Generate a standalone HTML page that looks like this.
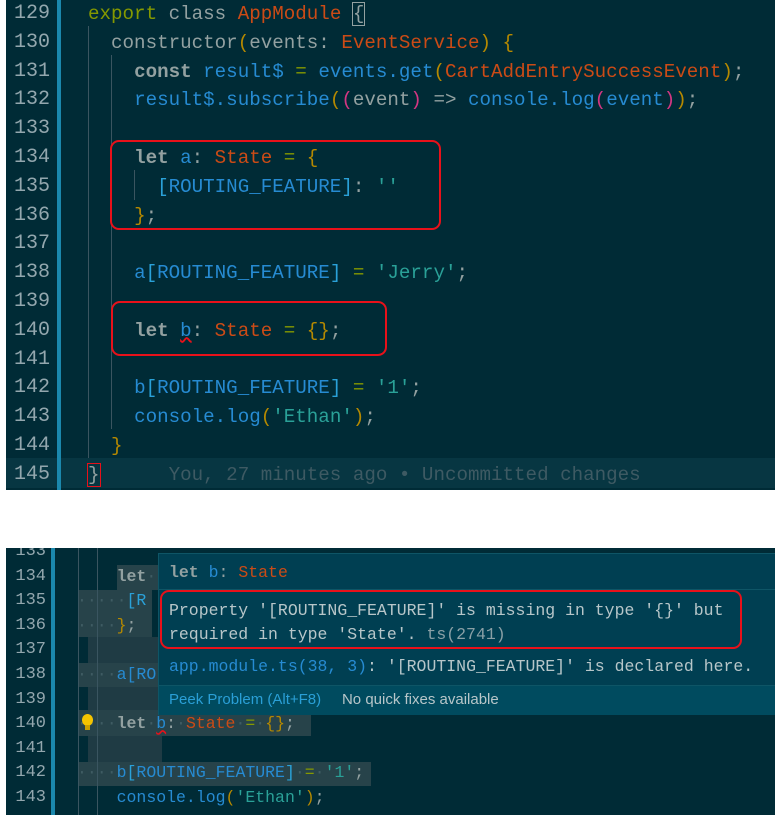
<!DOCTYPE html>
<html><head><style>
body{margin:0;width:775px;height:815px;background:#fff;position:relative;overflow:hidden;font-family:"Liberation Mono",monospace}
.p{position:absolute;background:#002b36;overflow:hidden}
.ln{position:absolute;color:#93a7ae;text-align:right;white-space:pre}
.c{position:absolute;white-space:pre;color:#93a1a1}
.k{color:#93a1a1;font-weight:bold}.ex{color:#859900}.o{color:#cb4b16}.b{color:#268bd2}.y{color:#b58900}.m{color:#d33682}.s{color:#2aa198}.g{color:#859900}.lb{color:#2aa1d8}
.guide{position:absolute;width:1px;background:#3a5560}
.red{position:absolute;border:2px solid #e8111a;border-radius:9px}
.d{color:#3f5c63}
.hl{position:absolute;background:#27434a}
</style></head><body>
<div class="p" style="left:6px;top:0;width:769px;height:490px;font-size:19.2px">
<div style="position:absolute;left:0;top:458px;width:769px;height:30px;background:#073642"></div>
<div style="position:absolute;left:51px;top:0;width:4px;height:490px;background:#1b88ad"></div>
<div class="guide" style="left:82px;top:26px;height:432px"></div>
<div class="guide" style="left:105px;top:55px;height:374px"></div>
<div class="guide" style="left:128px;top:170px;height:30px"></div>
<div class="ln" style="left:0;width:44px;top:0;line-height:28.8px;font-size:20px">129
130
131
132
133
134
135
136
137
138
139
140
141
142
143
144
145</div>
<div class="c" style="left:82px;top:0;line-height:28.8px"><span class="ex">export</span> class <span class="o">AppModule</span> <span style="outline:1px solid #93a1a1">{</span>
  constructor<span class="y">(</span>events: <span class="o">EventService</span><span class="y">)</span> <span class="y">{</span>
    <span class="k">const</span> <span class="b">result$</span> <span class="g">=</span> <span class="b">events.get</span><span class="y">(</span><span class="o">CartAddEntrySuccessEvent</span><span class="y">)</span>;
    <span class="b">result$.subscribe</span><span class="y">(</span><span class="m">(</span>event<span class="m">)</span> => <span class="b">console.log</span><span class="m">(</span><span class="b">event</span><span class="m">)</span><span class="y">)</span>;

    <span class="k">let</span> <span class="b">a</span>: <span class="o">State</span> <span class="g">=</span> <span class="y">{</span>
      <span class="lb">[</span><span class="b">ROUTING_FEATURE</span><span class="lb">]</span>: <span class="s">''</span>
    <span class="y">}</span>;

    <span class="b">a</span><span class="lb">[</span><span class="b">ROUTING_FEATURE</span><span class="lb">]</span> <span class="g">=</span> <span class="s">'Jerry'</span>;

    <span class="k">let</span> <span class="b" style="text-decoration:underline wavy #e8111a">b</span>: <span class="o">State</span> <span class="g">=</span> <span class="y">{}</span>;

    <span class="b">b</span><span class="lb">[</span><span class="b">ROUTING_FEATURE</span><span class="lb">]</span> <span class="g">=</span> <span class="s">'1'</span>;
    <span class="b">console.log</span><span class="y">(</span><span class="s">'Ethan'</span><span class="y">)</span>;
  <span class="y">}</span>
<span style="outline:1px solid #e8111a">}</span>      <span style="color:#3e5a63">You, 27 minutes ago • Uncommitted changes</span></div>
<div class="red" style="left:104px;top:140px;width:327px;height:86px"></div>
<div class="red" style="left:105px;top:301px;width:272px;height:51px"></div>
</div>

<div class="p" style="left:6px;top:548px;width:769px;height:267px;font-size:16.5px">
<div style="position:absolute;left:45px;top:0;width:4px;height:267px;background:#1b88ad"></div>
<div class="hl" style="left:111px;top:17px;width:45px;height:25px"></div>
<div class="hl" style="left:72px;top:42px;width:74px;height:47px"></div>
<div class="hl" style="left:82px;top:89px;width:74px;height:26px;background:#1f3b44"></div>
<div class="hl" style="left:72px;top:115px;width:84px;height:24px"></div>
<div class="hl" style="left:82px;top:139px;width:74px;height:23px;background:#1f3b44"></div>
<div class="hl" style="left:72px;top:162px;width:233px;height:26px"></div>
<div class="hl" style="left:82px;top:188px;width:74px;height:26px;background:#1f3b44"></div>
<div class="hl" style="left:72px;top:214px;width:293px;height:24px"></div>
<div class="guide" style="left:72px;top:0;height:267px"></div>
<div class="guide" style="left:91px;top:0;height:267px"></div>
<div class="ln" style="left:0;width:40px;top:-8px;line-height:24.6px;font-size:17px">133
134
135
136
137
138
139
140
141
142
143</div>
<div class="c" style="left:71px;top:-8px;line-height:24.6px">
    <span class="k">let</span><span class="d">·</span>
<span class="d">·····</span><span class="lb">[R</span>
<span class="d">····</span><span class="y">}</span>;

<span class="d">····</span><span class="b">a[RO</span>

<span class="d">····</span><span class="k">let</span><span class="d">·</span><span class="b" style="text-decoration:underline wavy #e8111a">b</span>:<span class="d">·</span><span class="o">State</span><span class="d">·</span><span class="g">=</span><span class="d">·</span><span class="y">{}</span>;

<span class="d">····</span><span class="b">b</span><span class="lb">[</span><span class="b">ROUTING_FEATURE</span><span class="lb">]</span><span class="d">·</span><span class="g">=</span><span class="d">·</span><span class="s">'1'</span>;
    <span class="b">console.log</span><span class="y">(</span><span class="s">'Ethan'</span><span class="y">)</span>;</div>
<div style="position:absolute;left:76px;top:166px;width:11px;height:12px;background:#f5c400;border-radius:50%"></div>
<div style="position:absolute;left:79px;top:177px;width:5px;height:5px;background:#c9a000"></div>
<div style="position:absolute;left:152px;top:5px;width:617px;height:160px;background:#003f52;border:1px solid #0e5566">
<div style="position:absolute;left:0;top:35px;width:617px;height:1px;background:#0e5566"></div>
<div style="position:absolute;left:0;top:131px;width:617px;height:29px;background:#004b5f;border-top:1px solid #0e5566"></div>
<div class="c" style="left:10px;top:9px;font-size:16.5px"><span class="k">let</span> <span class="b">b</span>: <span class="o">State</span></div>
<div class="c" style="left:10px;top:45px;font-size:16.5px;line-height:24px;color:#b7c6c9">Property '[ROUTING_FEATURE]' is missing in type '{}' but
required in type 'State'. <span style="color:#8aa0a6">ts(2741)</span></div>
<div class="c" style="left:10px;top:103px;font-size:16.5px;color:#b7c6c9"><span class="b">app.module.ts(38, 3)</span>: '[ROUTING_FEATURE]' is declared here.</div>
<div class="c" style="left:10px;top:137px;font-family:'Liberation Sans',sans-serif;font-size:15px;color:#2a9fd6">Peek Problem (Alt+F8)<span style="color:#b7c6c9">&nbsp;&nbsp;&nbsp;&nbsp;&nbsp;No quick fixes available</span></div>
<div class="red" style="left:1px;top:36px;width:578px;height:55px"></div>
</div>
</div>
</body></html>
